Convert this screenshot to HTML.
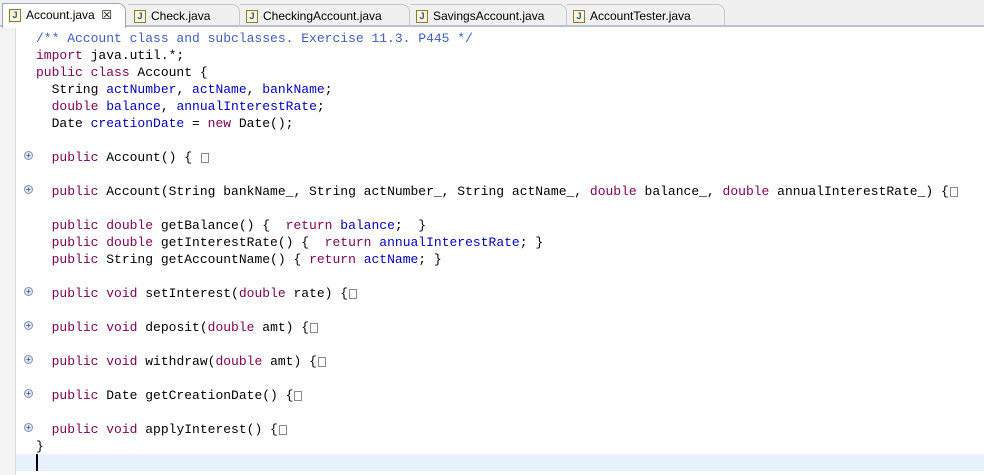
<!DOCTYPE html>
<html><head><meta charset="utf-8"><style>
body{margin:0;width:984px;height:475px;overflow:hidden;background:#fff;font-family:"Liberation Sans",sans-serif;position:relative}
.tabs{position:absolute;left:0;top:0;width:984px;height:27px;background:#f0f0f0;border-bottom:2px solid #b8c2cf;box-sizing:border-box}
.tab{position:absolute;top:4px;height:23px;font-size:12px;color:#000;line-height:23px;border-right:1px solid #c8c8c8;border-top:1px solid #c8c8c8;border-radius:0 8px 0 0;box-sizing:border-box}
.tab.active{background:#fff;border:1px solid #9ca8b8;border-bottom:none;top:3px;height:25px}
.ic{position:absolute;left:6px;top:5px;width:10px;height:11px;border:1px solid #8a7a40;background:#fdf6d0;font-size:9px;line-height:11px;text-align:center;color:#2050a0;font-weight:bold}
.lbl{position:absolute;left:23px}
.gut{position:absolute;left:0;top:28px;width:15px;height:447px;background:#f3f3f3;border-right:1px solid #dcdcdc}
.code{position:absolute;left:36px;top:30px;font-family:"Liberation Mono",monospace;font-size:13px;line-height:17px;white-space:pre;color:#000}
.k{color:#7f0055}.f{color:#0000c0}.c{color:#3f5fbf}
.cur{position:absolute;left:16px;top:454px;width:968px;height:17px;background:#e8f2fe}
.caret{position:absolute;left:36px;top:454px;width:2px;height:17px;background:#000}
.fold{position:absolute;left:24px;width:7px;height:7px;border:1px solid #8090b0;border-radius:50%;background:#dde6f4;font-size:8px;line-height:7px;text-align:center;color:#203060}
.box{display:inline-block;width:8px;height:10px;border:1px solid #888;vertical-align:-2px;margin-left:1px;box-sizing:border-box}
</style></head><body>
<div class="tabs">
<div class="tab active" style="left:2px;width:124px"><span class="ic">J</span><span class="lbl">Account.java&nbsp; ☒</span></div>
<div class="tab" style="left:128px;width:112px"><span class="ic">J</span><span class="lbl">Check.java</span></div>
<div class="tab" style="left:240px;width:170px"><span class="ic">J</span><span class="lbl">CheckingAccount.java</span></div>
<div class="tab" style="left:410px;width:157px"><span class="ic">J</span><span class="lbl">SavingsAccount.java</span></div>
<div class="tab" style="left:567px;width:158px"><span class="ic">J</span><span class="lbl">AccountTester.java</span></div>
</div>
<div class="gut"></div>
<div class="cur"></div><div class="caret"></div>
<div class="fold" style="top:151px">+</div>
<div class="fold" style="top:185px">+</div>
<div class="fold" style="top:287px">+</div>
<div class="fold" style="top:321px">+</div>
<div class="fold" style="top:355px">+</div>
<div class="fold" style="top:389px">+</div>
<div class="fold" style="top:423px">+</div>
<div class="code"><span class="c">/** Account class and subclasses. Exercise 11.3. P445 */</span>
<span class="k">import</span> java.util.*;
<span class="k">public class</span> Account {
  String <span class="f">actNumber</span>, <span class="f">actName</span>, <span class="f">bankName</span>;
  <span class="k">double</span> <span class="f">balance</span>, <span class="f">annualInterestRate</span>;
  Date <span class="f">creationDate</span> = <span class="k">new</span> Date();

  <span class="k">public</span> Account() { <span class="box"></span>

  <span class="k">public</span> Account(String bankName_, String actNumber_, String actName_, <span class="k">double</span> balance_, <span class="k">double</span> annualInterestRate_) {<span class="box"></span>

  <span class="k">public double</span> getBalance() {  <span class="k">return</span> <span class="f">balance</span>;  }
  <span class="k">public double</span> getInterestRate() {  <span class="k">return</span> <span class="f">annualInterestRate</span>; }
  <span class="k">public</span> String getAccountName() { <span class="k">return</span> <span class="f">actName</span>; }

  <span class="k">public void</span> setInterest(<span class="k">double</span> rate) {<span class="box"></span>

  <span class="k">public void</span> deposit(<span class="k">double</span> amt) {<span class="box"></span>

  <span class="k">public void</span> withdraw(<span class="k">double</span> amt) {<span class="box"></span>

  <span class="k">public</span> Date getCreationDate() {<span class="box"></span>

  <span class="k">public void</span> applyInterest() {<span class="box"></span>
}
</div>
</body></html>
